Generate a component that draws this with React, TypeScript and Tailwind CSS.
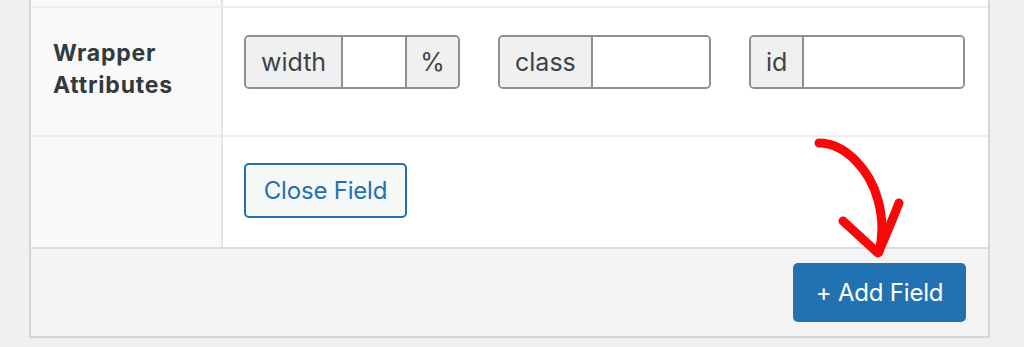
const font = { fontFamily: 'Inter, "Noto Sans", sans-serif' };

function Group({ pre, post, w, inputW }: { pre: string; post?: string; w: string; inputW?: string }) {
  return (
    <div className={`flex h-[54px] ${w} rounded-[5px] border-2 border-[#8c8f94] overflow-hidden`}>
      <span className="flex items-center px-[15px] pt-[1px] bg-[#f0f0f1] border-r-2 border-[#8c8f94] text-[25px] text-[#3c434a]">
        {pre}
      </span>
      <span className={`bg-white ${inputW ?? "flex-1"}`} />
      {post && (
        <span className="flex flex-1 items-center justify-center pt-[1px] bg-[#f0f0f1] border-l-2 border-[#8c8f94] text-[25px] text-[#3c434a]">
          {post}
        </span>
      )}
    </div>
  );
}

export default function App() {
  return (
    <div className="relative w-[1024px] h-[347px] bg-[#f0f0f1] overflow-hidden" style={font}>
      <div className="ml-[29px] w-[961px] border-x-2 border-b-2 border-[#d3d6d9] bg-white">
        {/* tail of the previous row */}
        <div className="grid grid-cols-[192px_1fr] h-[6px]">
          <div className="bg-[#f9f9f9] border-r-2 border-[#e4e4e4]" />
          <div />
        </div>

        <div className="grid grid-cols-[192px_1fr] h-[129px] border-t-2 border-[#ededed]">
          <div className="bg-[#f9f9f9] border-r-2 border-[#e4e4e4] pl-[22px] pt-[29px] text-[23px] leading-[32px] tracking-[0.8px] font-bold text-[#32393f]">
            Wrapper
            <br />
            Attributes
          </div>
          <div className="flex gap-[38px] pl-[21px] pt-[27px]">
            <Group pre="width" post="%" w="w-[216px]" inputW="w-[62px]" />
            <Group pre="class" w="w-[213px]" />
            <Group pre="id" w="w-[216px]" />
          </div>
        </div>

        <div className="grid grid-cols-[192px_1fr] h-[112px] border-t-2 border-[#ededed]">
          <div className="bg-[#f9f9f9] border-r-2 border-[#e4e4e4]" />
          <div className="pl-[21px] pt-[26px]">
            <button className="h-[55px] w-[163px] rounded-[5px] border-2 border-[#2271b1] bg-[#f6f7f7] text-[24px] tracking-[-0.2px] text-[#2271b1]">
              Close Field
            </button>
          </div>
        </div>

        <div className="flex justify-end h-[89px] border-t-2 border-[#dcdcde] bg-[#f4f4f4] pt-[14px] pr-[22px]">
          <button className="h-[59px] w-[173px] rounded-[5px] bg-[#2271b1] text-[24px] tracking-[-0.2px] text-white">
            + Add Field
          </button>
        </div>
      </div>

      <svg className="absolute left-0 top-0 pointer-events-none" width="1024" height="347" viewBox="0 0 1024 347" fill="none">
        <path
          d="M819 143 C 845 143 870 170 878 200 C 884 222 882 240 879 252"
          stroke="#f80808"
          strokeWidth="9"
          strokeLinecap="round"
        />
        <path
          d="M843 221 L878 253 C 886 236 893 218 899 203"
          stroke="#f80808"
          strokeWidth="9"
          strokeLinecap="round"
          strokeLinejoin="round"
        />
      </svg>
    </div>
  );
}
